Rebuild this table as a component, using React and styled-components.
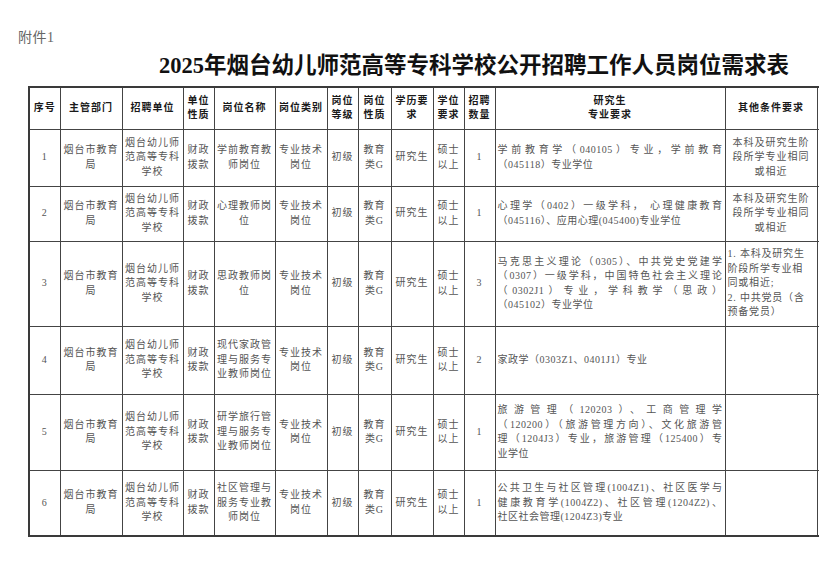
import React from 'react';
import styled, { createGlobalStyle } from 'styled-components';

const GlobalStyle = createGlobalStyle`
  html, body {
    margin: 0;
    padding: 0;
    background: #fff;
    overflow: hidden;
  }
`;

const Page = styled.div`
  padding: 28px 0 0 18px;
  font-family: "Liberation Serif", "Noto Sans CJK SC", serif;
`;

const Annex = styled.div`
  font-size: 14px;
  line-height: 20px;
  color: #666;
  letter-spacing: 0.5px;
`;

const Title = styled.h1`
  margin: 4px 0 6px;
  padding-left: 141px;
  font-size: 22.5px;
  line-height: 28px;
  font-weight: 700;
  color: #111;
  white-space: nowrap;
`;

const Sheet = styled.table`
  margin-left: 10px;
  border-collapse: collapse;
  table-layout: fixed;
  width: 878px;
  border: 2px solid #3a3a3a;
`;

const HeadCell = styled.th`
  border: 1.5px solid #444;
  padding: 0 2px;
  font-size: 10px;
  line-height: 14px;
  letter-spacing: 1px;
  font-weight: 700;
  color: #1a1a1a;
  text-align: center;
  vertical-align: middle;
`;

const Cell = styled.td`
  border: 1.5px solid #444;
  padding: 0 2px;
  font-size: 10px;
  line-height: 14.5px;
  letter-spacing: ${p => p.$spacing || '1px'};
  color: #555;
  text-align: ${p => p.$align || 'center'};
  vertical-align: middle;
  word-break: break-all;
`;

const Row = styled.tr`
  height: ${p => p.$h}px;
`;

const Line = styled.span`
  display: block;
  text-align: justify;
  text-align-last: ${p => (p.$last ? 'left' : 'justify')};
  white-space: nowrap;
`;

const widths = [31, 62, 61, 31, 61, 52, 31, 33, 42, 31, 31, 230, 92, 90];

const heads = [
  '序号', '主管部门', '招聘单位', '单位性质', '岗位名称', '岗位类别',
  '岗位等级', '岗位性质', '学历要求', '学位要求', '招聘数量',
];

const rows = [
  {
    h: 57,
    name: '学前教育教师岗位',
    count: 1,
    major: ['学前教育学（040105）专业，学前教育', '（045118）专业学位'],
    other: '本科及研究生阶段所学专业相同或相近',
  },
  {
    h: 55,
    name: '心理教师岗位',
    count: 1,
    major: ['心理学（0402）一级学科， 心理健康教育', '（045116）、应用心理(045400)专业学位'],
    other: '本科及研究生阶段所学专业相同或相近',
  },
  {
    h: 85,
    name: '思政教师岗位',
    count: 3,
    major: [
      '马克思主义理论（0305）、中共党史党建学',
      '（0307）一级学科，中国特色社会主义理论',
      '（0302J1）专业，学科教学（思政）',
      '（045102）专业学位',
    ],
    otherLines: ['1. 本科及研究生', '阶段所学专业相', '同或相近;', '2. 中共党员（含', '预备党员）'],
  },
  {
    h: 68,
    name: '现代家政管理与服务专业教师岗位',
    count: 2,
    major: ['家政学（0303Z1、0401J1）专业'],
  },
  {
    h: 76,
    name: '研学旅行管理与服务专业教师岗位',
    count: 1,
    major: [
      '旅游管理（120203）、工商管理学',
      '（120200）（旅游管理方向）、文化旅游管',
      '理（1204J3）专业，旅游管理（125400）专',
      '业学位',
    ],
  },
  {
    h: 66,
    name: '社区管理与服务专业教师岗位',
    count: 1,
    major: [
      '公共卫生与社区管理(1004Z1)、社区医学与',
      '健康教育学(1004Z2)、社区管理(1204Z2)、',
      '社区社会管理(1204Z3)专业',
    ],
  },
];

export default function App() {
  return (
    <Page>
      <GlobalStyle />
      <Annex>附件1</Annex>
      <Title>2025年烟台幼儿师范高等专科学校公开招聘工作人员岗位需求表</Title>
      <Sheet>
        <colgroup>
          {widths.map((w, i) => (
            <col key={i} style={{ width: w }} />
          ))}
        </colgroup>
        <thead>
          <Row $h={42}>
            {heads.map(h => (
              <HeadCell key={h}>{h}</HeadCell>
            ))}
            <HeadCell>
              研究生
              <br />
              专业要求
            </HeadCell>
            <HeadCell>其他条件要求</HeadCell>
            <HeadCell />
          </Row>
        </thead>
        <tbody>
          {rows.map((r, i) => (
            <Row key={i} $h={r.h}>
              <Cell>{i + 1}</Cell>
              <Cell>烟台市教育局</Cell>
              <Cell>烟台幼儿师范高等专科学校</Cell>
              <Cell>财政拨款</Cell>
              <Cell>{r.name}</Cell>
              <Cell>专业技术岗位</Cell>
              <Cell>初级</Cell>
              <Cell>教育类G</Cell>
              <Cell>研究生</Cell>
              <Cell>硕士以上</Cell>
              <Cell>{r.count}</Cell>
              <Cell $align="left" $spacing="0.5px">
                {r.major.map((m, j) => (
                  <Line key={j} $last={j === r.major.length - 1}>
                    {m}
                  </Line>
                ))}
              </Cell>
              {r.otherLines ? (
                <Cell $align="left" $spacing="0.8px">
                  {r.otherLines.map((l, j) => (
                    <Line key={j} $last>
                      {l}
                    </Line>
                  ))}
                </Cell>
              ) : (
                <Cell>{r.other}</Cell>
              )}
              <Cell />
            </Row>
          ))}
        </tbody>
      </Sheet>
    </Page>
  );
}
